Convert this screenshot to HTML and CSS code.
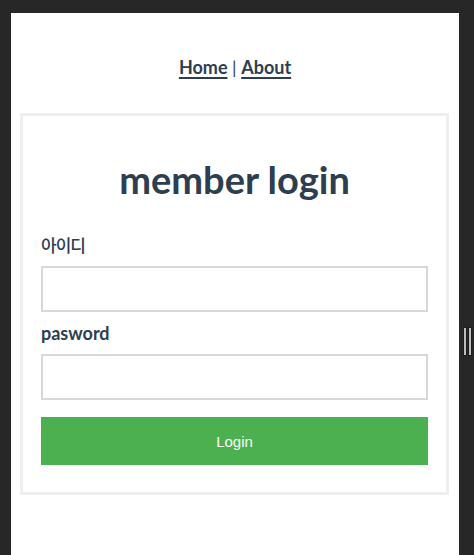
FILE: index.html
```html
<!DOCTYPE html>
<html lang="ko">
<head>
<meta charset="utf-8">
<title>member login</title>
<link rel="stylesheet" href="styles.css">
</head>
<body>
<div class="frame">
  <nav class="nav">
    <a href="#" class="nav-link">Home</a> <span class="sep">|</span> <a href="#" class="nav-link">About</a>
  </nav>
  <div class="card">
    <h1 class="title">member login</h1>
    <label class="label label-ko" for="uid">아이디</label>
    <input class="field" id="uid" type="text">
    <label class="label" for="pw">pasword</label>
    <input class="field" id="pw" type="password">
    <button class="login-btn" type="button">Login</button>
  </div>
</div>
<div class="side">
  <div class="handle"><span class="bar"></span><span class="bar"></span></div>
</div>
</body>
</html>
```

FILE: styles.css
```css
html, body {
  margin: 0;
  padding: 0;
  height: 100%;
}
body {
  background: #272727;
  display: flex;
  align-items: flex-start;
  overflow: hidden;
  font-family: Lato, "Noto Sans", "Noto Sans CJK KR", sans-serif;
  color: #2c3e50;
}
.frame {
  margin: 13px 0 0 11px;
  width: 448px;
  height: 542px;
  background: #ffffff;
  display: flex;
  flex-direction: column;
}
.nav {
  padding-top: 42px;
  height: 24px;
  line-height: 24px;
  font-size: 18px;
  text-align: center;
}
.nav-link {
  color: #2c3e50;
  font-weight: 700;
  text-decoration: underline;
  text-underline-offset: 3px;
  text-decoration-thickness: 1.5px;
}
.sep {
  font-weight: 400;
}
.card {
  margin: 34px 10px 0 9px;
  border: 3px solid #efefef;
  padding: 0 18px 27px;
  display: flex;
  flex-direction: column;
}
.title {
  margin: 40px 0 31px;
  font-size: 38px;
  line-height: 46px;
  font-weight: 700;
  text-align: center;
  color: #2c3e50;
}
.label {
  display: block;
  font-size: 18px;
  line-height: 24px;
  font-weight: 700;
  color: #2c3e50;
}
.label-ko {
  font-family: "Noto Sans CJK KR", sans-serif;
  font-weight: 500;
  font-size: 17px;
  letter-spacing: -1px;
  line-height: 24px;
}
.field {
  display: block;
  box-sizing: border-box;
  width: 100%;
  height: 46px;
  margin: 9px 0;
  border: 2px solid #d8d8d8;
  background: #ffffff;
  outline: none;
  padding: 0 12px;
}
.login-btn {
  display: block;
  width: 100%;
  height: 48px;
  margin-top: 8px;
  border: none;
  background: #4caf50;
  color: #f7fcf7;
  font-family: "Liberation Sans", Arial, sans-serif;
  font-size: 15px;
  cursor: pointer;
}
.side {
  flex: 1;
  height: 100%;
}
.handle {
  margin: 328px 0 0 5px;
  display: flex;
  gap: 3px;
}
.bar {
  width: 2px;
  height: 27px;
  background: #bdbdbd;
  box-shadow: 0 0 0 1px #1e1e1e;
}
```
